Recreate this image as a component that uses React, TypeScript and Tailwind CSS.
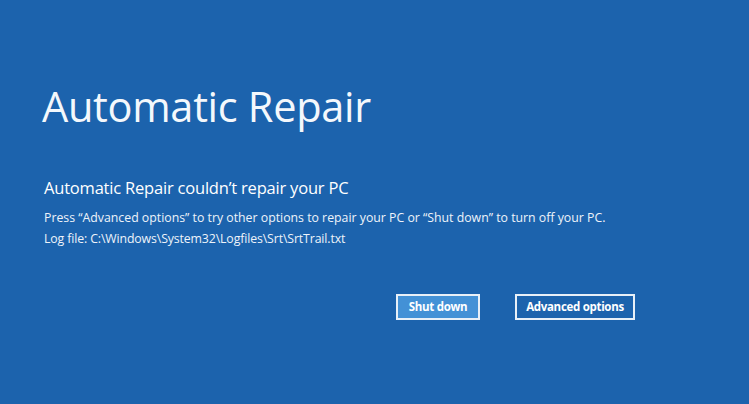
import React from "react";

export default function App() {
  return (
    <div
      className="w-[749px] h-[404px] bg-[#1c63ad] text-white overflow-hidden"
      style={{ fontFamily: '"Open Sans", "Noto Sans", sans-serif' }}
    >
      <div className="pl-[42px] pt-[81px]">
        <h1 className="text-[41.5px] leading-[50px] font-normal tracking-[-0.3px] text-[#f4f8fc]">
          Automatic Repair
        </h1>
        <p className="mt-[46px] text-[16.5px] leading-[22px] tracking-[-0.2px] ml-[2px]">
          Automatic Repair couldn’t repair your PC
        </p>
        <p className="mt-[8px] text-[12.3px] leading-[21px] tracking-[0px] ml-[2px] text-[#eef3fa]">
          Press “Advanced options” to try other options to repair your PC or “Shut down” to turn off your PC.
        </p>
        <p className="text-[12.3px] leading-[21px] tracking-[-0.12px] ml-[2px] text-[#eef3fa]">
          Log file: C:\Windows\System32\Logfiles\Srt\SrtTrail.txt
        </p>
      </div>
      <div className="flex gap-[35px] pl-[396px] mt-[45px]">
        <button className="w-[84px] h-[26px] border-2 border-[#e8f0f8] bg-[#4391d6] text-[11.5px] font-bold tracking-[-0.3px]">
          Shut down
        </button>
        <button className="w-[120px] h-[26px] border-2 border-[#e8f0f8] bg-transparent text-[11.5px] font-bold tracking-[-0.3px]">
          Advanced options
        </button>
      </div>
    </div>
  );
}
